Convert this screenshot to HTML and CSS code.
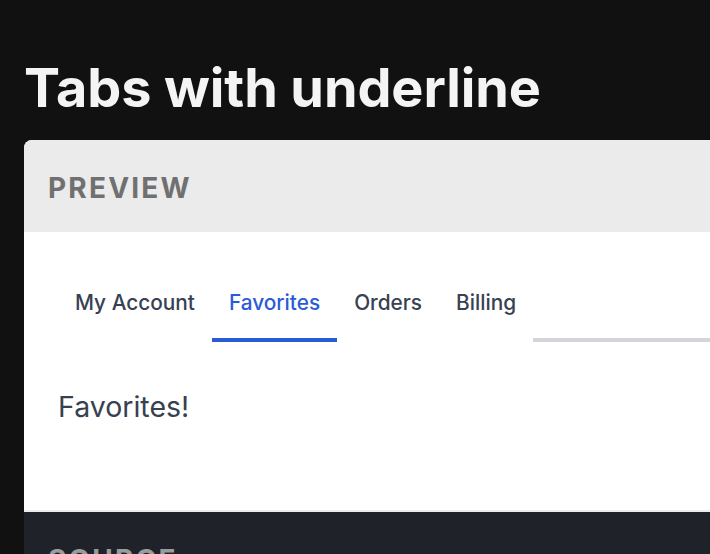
FILE: index.html
```html
<!DOCTYPE html>
<html lang="en">
<head>
<meta charset="utf-8">
<title>Tabs with underline</title>
<link rel="stylesheet" href="styles.css">
</head>
<body>
<main class="page">
  <h1 class="title">Tabs with underline</h1>
  <section class="card">
    <div class="card-head"><span class="label">PREVIEW</span></div>
    <div class="preview">
      <nav class="tabs">
        <a class="tab">My Account</a>
        <a class="tab active">Favorites</a>
        <a class="tab">Orders</a>
        <a class="tab">Billing</a>
        <span class="tab-fill"></span>
      </nav>
      <p class="panel">Favorites!</p>
    </div>
    <div class="source-head"><span class="label label-dark">SOURCE</span></div>
  </section>
</main>
</body>
</html>
```

FILE: styles.css
```css
html, body {
  margin: 0;
  padding: 0;
  background: #111111;
  overflow: hidden;
  font-family: Inter, "Noto Sans", "Liberation Sans", sans-serif;
}

.page {
  padding: 55px 0 0 24px;
  width: 760px;
}

.title {
  margin: 0 0 20px;
  font-size: 54px;
  line-height: 65px;
  font-weight: 700;
  color: #f4f4f5;
  letter-spacing: -0.1px;
}

.card {
  border-radius: 8px 0 0 0;
  overflow: hidden;
  background: #ffffff;
}

.card-head {
  height: 92px;
  background: #ebebeb;
  display: flex;
  align-items: center;
  padding: 3px 0 0 24px;
  box-sizing: border-box;
}

.label {
  font-size: 28px;
  font-weight: 700;
  letter-spacing: 2.2px;
  color: #707070;
}

.label-dark {
  color: #9b9b9b;
}

.preview {
  height: 280px;
  box-sizing: border-box;
  padding: 37px 0 0 34px;
  background: #ffffff;
  border-bottom: 2px solid #ececec;
}

.tabs {
  display: flex;
  align-items: stretch;
}

.tab {
  padding: 20px 17px 21px;
  font-size: 20.8px;
  line-height: 28px;
  font-weight: 500;
  color: #374151;
  border-bottom: 4px solid transparent;
}

.tab.active {
  color: #2a5bd7;
  border-bottom-color: #2a5bd7;
}

.tab-fill {
  flex: 1;
  border-bottom: 4px solid #d4d5db;
}

.panel {
  margin: 47px 0 0;
  font-size: 28.5px;
  line-height: 36px;
  font-weight: 400;
  color: #374151;
}

.source-head {
  height: 92px;
  background: #1f2229;
  display: flex;
  align-items: center;
  padding: 3px 0 0 24px;
  box-sizing: border-box;
}
```
